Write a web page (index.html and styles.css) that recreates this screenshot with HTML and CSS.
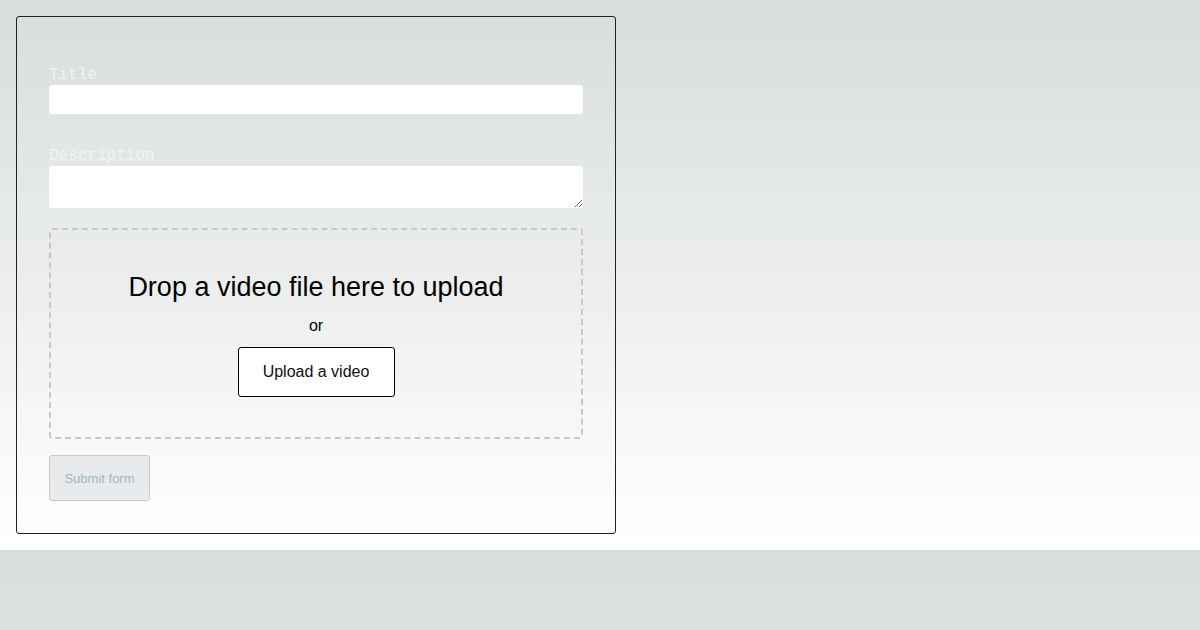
FILE: index.html
```html
<!DOCTYPE html>
<html lang="en">
<head>
    <meta charset="UTF-8">
    <meta name="viewport" content="width=device-width, initial-scale=1.0">
    <title>Upload a video</title>
    <link rel="stylesheet" href="styles.css">
</head>
<body>
    <form class="upload-form">
        <div class="form-group">
            <label for="title">Title</label>
            <input type="text" id="title" name="title">
        </div>
        <div class="form-group last">
            <label for="description">Description</label>
            <textarea id="description" name="description" rows="2"></textarea>
        </div>
        <div class="dropzone">
            <h2>Drop a video file here to upload</h2>
            <p>or</p>
            <button type="button" class="upload-btn">Upload a video</button>
        </div>
        <button type="submit" class="submit-btn" disabled>Submit form</button>
    </form>
</body>
</html>
```

FILE: styles.css
```css
/* General Styles */
body {
    margin: 8px;
    font-family: 'Liberation Sans', Arial, sans-serif;
    background: linear-gradient(to bottom, #d8dcdc, #ffffff);
}

/* Form Container */
.upload-form {
    margin: 8px;
    width: 534px;
    padding: 47px 32px 32px;
    border: 1px solid #222222;
    border-radius: 3px;
}

.form-group {
    margin-bottom: 31px;
}

.form-group.last {
    margin-bottom: 20px;
}

.form-group label {
    display: block;
    font-family: 'Liberation Mono', 'Courier New', monospace;
    font-size: 16px;
    line-height: 18px;
    padding-top: 2px;
    color: #f2f3f3;
    margin-bottom: 1px;
}

.form-group input,
.form-group textarea {
    display: block;
    box-sizing: border-box;
    width: 100%;
    border: none;
    border-radius: 3px;
    background-color: #ffffff;
    font-size: 14px;
}

.form-group input {
    height: 29px;
}

.form-group textarea {
    height: 42px;
    resize: vertical;
}

/* Drop Zone */
.dropzone {
    box-sizing: border-box;
    height: 211px;
    border: 2px dashed #c8c8c8;
    border-radius: 3px;
    text-align: center;
    padding-top: 42px;
}

.dropzone h2 {
    margin: 0;
    font-size: 27px;
    font-weight: normal;
    color: #000000;
}

.dropzone p {
    margin: 14px 0 12px;
    font-size: 16px;
    color: #000000;
}

.upload-btn {
    width: 157px;
    height: 50px;
    background-color: #ffffff;
    border: 1px solid #000000;
    border-radius: 3px;
    font-family: 'Liberation Sans', Arial, sans-serif;
    font-size: 16px;
    color: #111111;
}

/* Submit Button */
.submit-btn {
    display: block;
    margin-top: 16px;
    width: 101px;
    height: 46px;
    background-color: #e8eaeb;
    border: 1px solid #c8c8c8;
    border-radius: 3px;
    font-family: 'Liberation Sans', Arial, sans-serif;
    font-size: 13px;
    color: #a2b6c2;
}
```
